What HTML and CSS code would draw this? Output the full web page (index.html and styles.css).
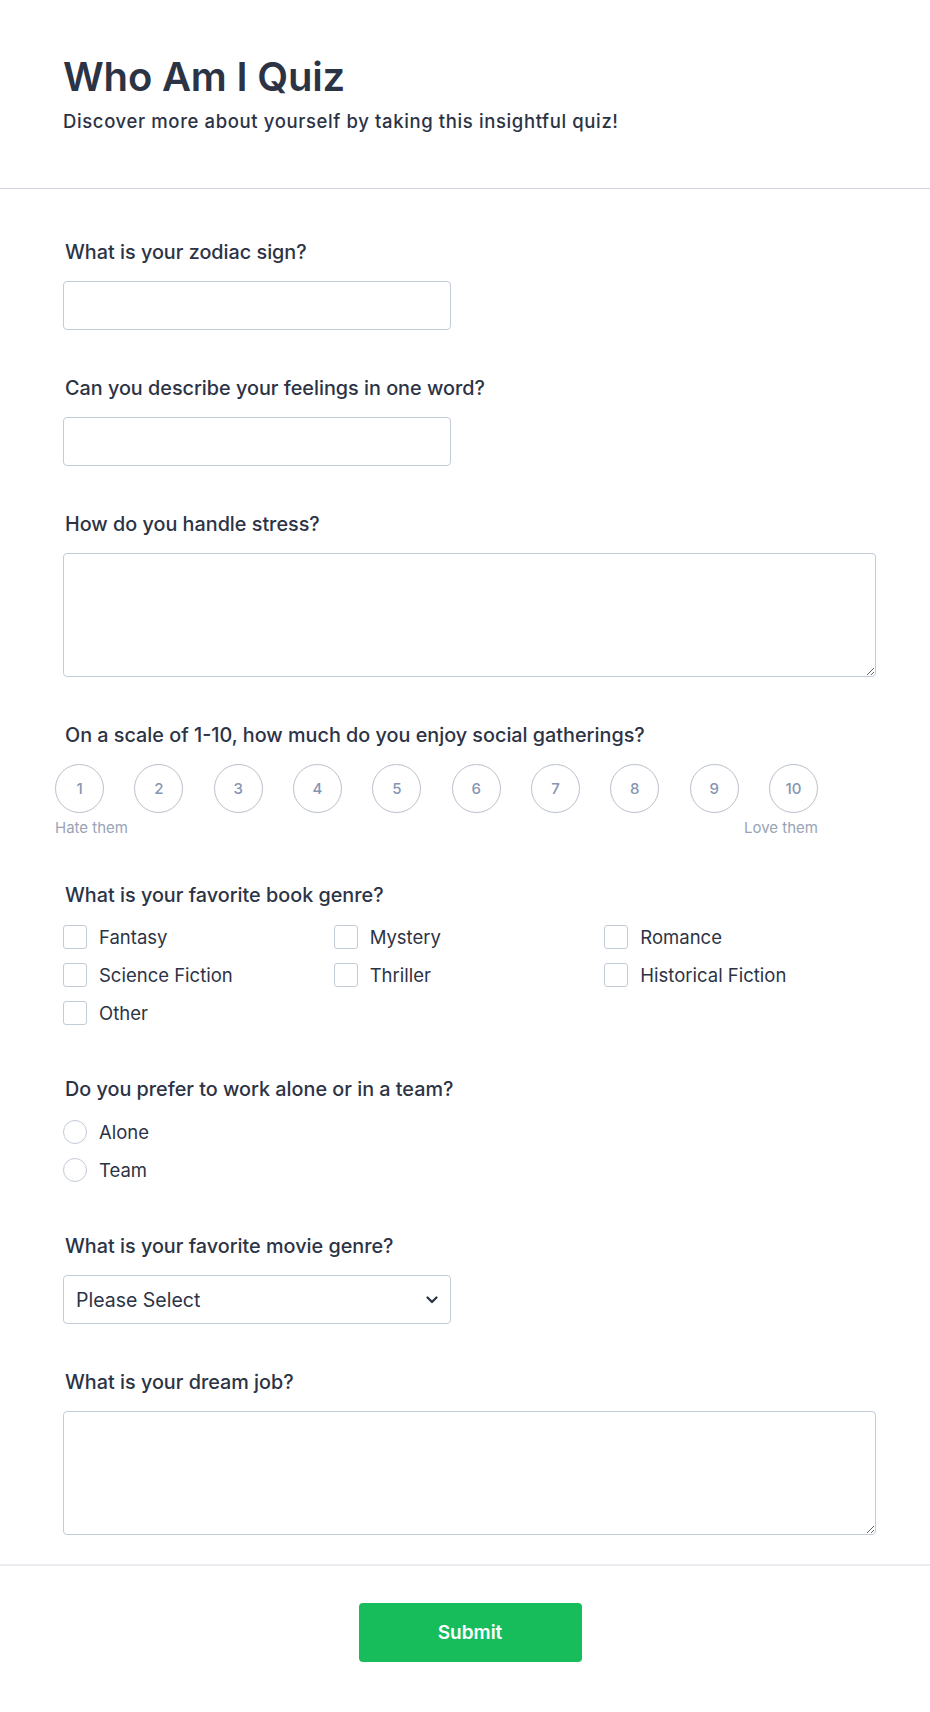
FILE: index.html
```html
<!DOCTYPE html>
<html lang="en">
<head>
<meta charset="utf-8">
<title>Who Am I Quiz</title>
<link rel="stylesheet" href="styles.css">
</head>
<body>
<header class="form-header">
  <h1 class="form-title">Who Am I Quiz</h1>
  <p class="form-subtitle">Discover more about yourself by taking this insightful quiz!</p>
</header>

<form class="form-body">
  <div class="field">
    <label class="field-label" for="zodiac">What is your zodiac sign?</label>
    <input class="text-input" id="zodiac" type="text">
  </div>

  <div class="field">
    <label class="field-label" for="feeling">Can you describe your feelings in one word?</label>
    <input class="text-input" id="feeling" type="text">
  </div>

  <div class="field">
    <label class="field-label" for="stress">How do you handle stress?</label>
    <textarea class="text-area" id="stress"></textarea>
  </div>

  <div class="field">
    <div class="field-label">On a scale of 1-10, how much do you enjoy social gatherings?</div>
    <div class="scale">
      <div class="scale-row">
        <span class="scale-item">1</span>
        <span class="scale-item">2</span>
        <span class="scale-item">3</span>
        <span class="scale-item">4</span>
        <span class="scale-item">5</span>
        <span class="scale-item">6</span>
        <span class="scale-item">7</span>
        <span class="scale-item">8</span>
        <span class="scale-item">9</span>
        <span class="scale-item">10</span>
      </div>
      <div class="scale-labels">
        <span>Hate them</span>
        <span>Love them</span>
      </div>
    </div>
  </div>

  <div class="field field-options">
    <div class="field-label">What is your favorite book genre?</div>
    <div class="option-grid">
      <label class="option"><input type="checkbox" class="check"><span>Fantasy</span></label>
      <label class="option"><input type="checkbox" class="check"><span>Mystery</span></label>
      <label class="option"><input type="checkbox" class="check"><span>Romance</span></label>
      <label class="option"><input type="checkbox" class="check"><span>Science Fiction</span></label>
      <label class="option"><input type="checkbox" class="check"><span>Thriller</span></label>
      <label class="option"><input type="checkbox" class="check"><span>Historical Fiction</span></label>
      <label class="option"><input type="checkbox" class="check"><span>Other</span></label>
    </div>
  </div>

  <div class="field field-options">
    <div class="field-label">Do you prefer to work alone or in a team?</div>
    <div class="option-list">
      <label class="option"><input type="radio" name="work" class="radio"><span>Alone</span></label>
      <label class="option"><input type="radio" name="work" class="radio"><span>Team</span></label>
    </div>
  </div>

  <div class="field">
    <label class="field-label" for="movie">What is your favorite movie genre?</label>
    <div class="select-wrap">
      <select class="select" id="movie">
        <option>Please Select</option>
      </select>
      <svg class="select-arrow" width="12" height="8" viewBox="0 0 12 8" aria-hidden="true">
        <path d="M1.5 1.5 L6 6 L10.5 1.5" fill="none" stroke="#2c3345" stroke-width="2.2" stroke-linecap="round" stroke-linejoin="round"/>
      </svg>
    </div>
  </div>

  <div class="field field-last">
    <label class="field-label" for="dream">What is your dream job?</label>
    <textarea class="text-area" id="dream"></textarea>
  </div>
</form>

<footer class="form-footer">
  <div class="footer-inner">
    <button class="submit" type="button">Submit</button>
  </div>
</footer>
</body>
</html>
```

FILE: styles.css
```css
* {
  box-sizing: border-box;
}

html, body {
  margin: 0;
  padding: 0;
  background: #ffffff;
}

body {
  font-family: Inter, "Noto Sans", "Liberation Sans", sans-serif;
  color: #2c3345;
}

.form-header {
  padding: 53px 63px 55px;
  border-bottom: 1px solid #d3d6de;
}

.form-title {
  margin: 0;
  font-size: 40px;
  line-height: 48px;
  font-weight: 600;
  letter-spacing: -0.2px;
  color: #2c3345;
}

.form-subtitle {
  margin: 8px 0 0;
  font-size: 18.5px;
  line-height: 24px;
  font-weight: 500;
  letter-spacing: 0.62px;
  color: #2c3345;
}

.form-body {
  width: 812px;
  margin-left: 63px;
  padding-top: 51px;
}

.field {
  margin-bottom: 46px;
}

.field-options {
  margin-bottom: 50px;
}

.field-last {
  margin-bottom: 29px;
}

.field-label {
  display: block;
  padding-left: 2px;
  font-size: 19.8px;
  line-height: 24px;
  font-weight: 500;
  color: #2c3345;
  margin-bottom: 17px;
}

.text-input {
  display: block;
  width: 388px;
  height: 49px;
  border: 1px solid #c3cad8;
  border-radius: 4px;
  background: #fff;
  font: inherit;
  padding: 0 12px;
}

.text-area {
  display: block;
  width: 813px;
  height: 124px;
  border: 1px solid #c3cad8;
  border-radius: 4px;
  background: #fff;
  font: inherit;
  padding: 10px 12px;
  resize: vertical;
}

.scale {
  width: 763px;
  margin-left: -8px;
}

.scale-row {
  display: flex;
  justify-content: space-between;
  margin-top: 2px;
}

.scale-item {
  width: 49px;
  height: 49px;
  border: 1px solid #b9bfcc;
  border-radius: 50%;
  display: flex;
  align-items: center;
  justify-content: center;
  font-size: 15px;
  font-weight: 500;
  color: #8595b2;
}

.scale-labels {
  display: flex;
  justify-content: space-between;
  margin-top: 6px;
  font-size: 15px;
  line-height: 18px;
  color: #98a3b6;
}

.option-grid {
  display: grid;
  grid-template-columns: repeat(3, 1fr);
  row-gap: 10px;
  margin-top: -1px;
}

.option-list {
  display: flex;
  flex-direction: column;
  row-gap: 10px;
}

.option {
  display: flex;
  align-items: center;
  height: 28px;
  font-size: 18.5px;
  color: #2c3345;
}

.check,
.radio {
  -webkit-appearance: none;
  appearance: none;
  flex: none;
  width: 24px;
  height: 24px;
  margin: 0 12px 0 0;
  border: 1px solid #c3cad8;
  background: #fff;
}

.check {
  border-radius: 3px;
}

.radio {
  border-radius: 50%;
}

.select-wrap {
  position: relative;
  width: 388px;
}

.select {
  display: block;
  width: 388px;
  height: 49px;
  -webkit-appearance: none;
  appearance: none;
  border: 1px solid #c3cad8;
  border-radius: 4px;
  background: #fff;
  font-family: inherit;
  font-size: 19.5px;
  color: #2c3345;
  padding: 0 36px 0 12px;
}

.select-arrow {
  position: absolute;
  right: 13px;
  top: 21px;
  pointer-events: none;
}

.form-footer {
  border-top: 2px solid #eaecf1;
  padding: 37px 0 49px;
}

.footer-inner {
  width: 812px;
  margin-left: 64px;
  display: flex;
  justify-content: center;
}

.submit {
  width: 223px;
  height: 59px;
  border: 0;
  border-radius: 4px;
  background: #18bd5b;
  color: #fff;
  font-family: inherit;
  font-size: 19px;
  font-weight: 600;
}
```
